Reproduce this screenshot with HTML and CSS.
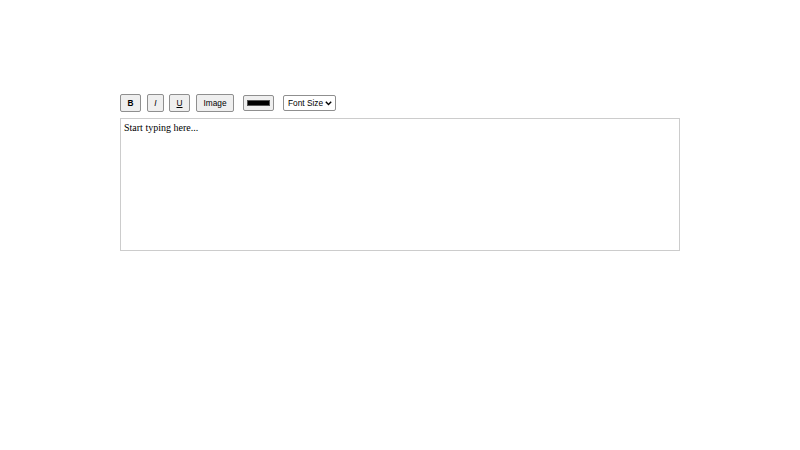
FILE: index.html
```html
<!DOCTYPE html>
<html>
<head>
<link rel="stylesheet" href="styles.css">
</head>
<body>
<div class="editor-wrap">
  <div class="toolbar">
    <button class="tb bold">B</button>
    <button class="tb ital">I</button>
    <button class="tb under">U</button>
    <button class="tb img">Image</button>
    <input class="color" type="color" value="#000000">
    <select class="size">
      <option>Font Size</option>
      <option>Small</option>
      <option>Large</option>
    </select>
  </div>
  <div class="editor" contenteditable="true">Start typing here...</div>
</div>
</body>
</html>
```
FILE: styles.css
```css
html, body {
  margin: 0;
  padding: 0;
  background: #fff;
}
.editor-wrap {
  width: 560px;
  margin: 94px auto 0;
}
.toolbar {
  display: flex;
  align-items: center;
  height: 18px;
  margin-bottom: 6px;
}
.tb {
  font-family: "Liberation Sans", Arial, sans-serif;
  font-size: 8.3px;
  height: 18px;
  padding: 0;
  margin-right: 6px;
  background: #efefef;
  border: 1px solid #8f8f8f;
  border-radius: 2px;
  color: #000;
}
.bold { font-weight: bold; width: 21px; }
.ital { font-style: italic; width: 17px; margin-right: 5px; }
.under { text-decoration: underline; width: 21px; }
.img { width: 38px; margin-right: 9px; }
.color {
  -webkit-appearance: none;
  appearance: none;
  width: 31px;
  height: 16px;
  padding: 4px 3px;
  margin: 0 9px 0 0;
  border: 1px solid #8f8f8f;
  border-radius: 2px;
  background: #efefef;
  box-sizing: border-box;
}
.color::-webkit-color-swatch-wrapper {
  padding: 0;
}
.color::-webkit-color-swatch {
  border: 1px solid #555;
  border-radius: 0;
}
.size {
  -webkit-appearance: none;
  appearance: none;
  font-family: "Liberation Sans", Arial, sans-serif;
  font-size: 8.3px;
  height: 16px;
  width: 53px;
  padding: 0 0 0 4px;
  border: 1px solid #8f8f8f;
  border-radius: 2px;
  background: #fff url("data:image/svg+xml,%3Csvg xmlns='http://www.w3.org/2000/svg' width='7' height='5' viewBox='0 0 7 5'%3E%3Cpath d='M0.8 0.8 L3.5 3.6 L6.2 0.8' fill='none' stroke='%23000' stroke-width='1.4'/%3E%3C/svg%3E") no-repeat right 3px center;
  color: #000;
}
.editor {
  border: 1px solid #ccc;
  height: 125px;
  padding: 3px;
  font-family: "Liberation Serif", "Times New Roman", serif;
  font-size: 10px;
  line-height: 1.15;
  outline: none;
}
```
